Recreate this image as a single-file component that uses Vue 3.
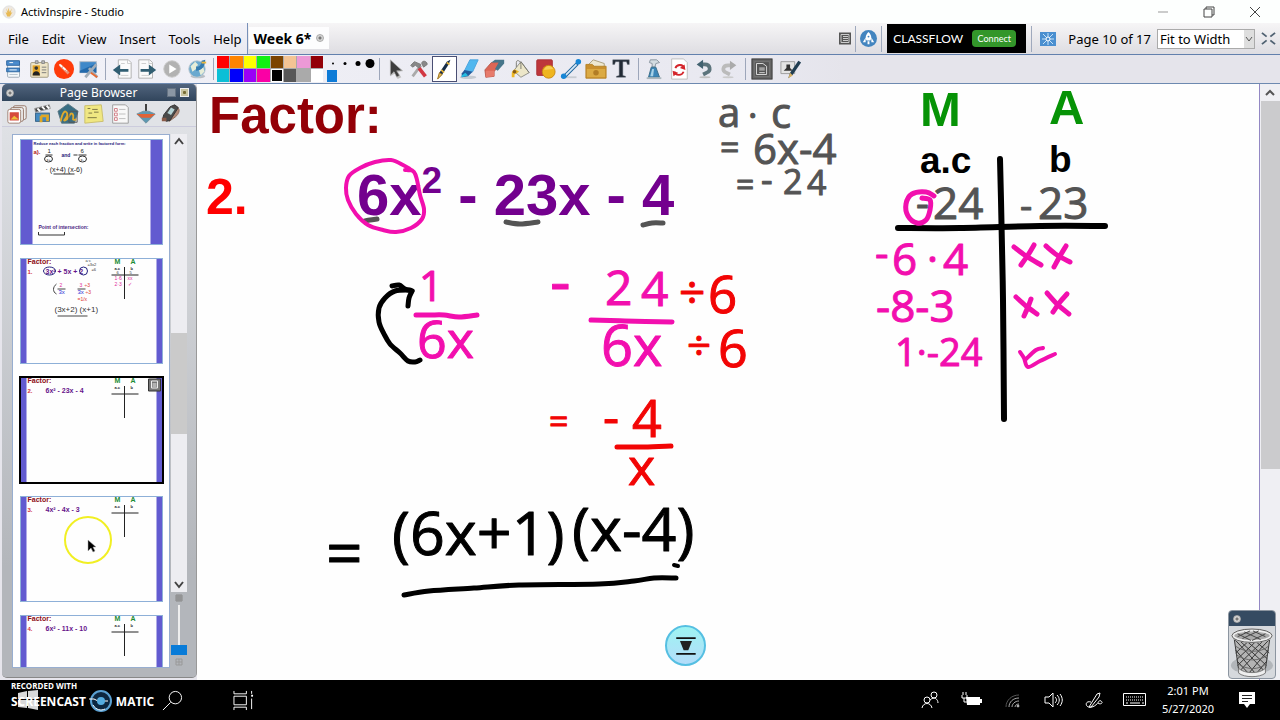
<script setup>
const menus = ['File', 'Edit', 'View', 'Insert', 'Tools', 'Help']

const icons = {
  browser: '<rect x="5" y="3" width="13" height="18" rx="1" fill="#f4f8fb" stroke="#9aa7b5"/><path d="M4 3h14v5H4zM4 11h14v4H4z" fill="#4b8ccd" stroke="#2d659f"/><path d="M7 5h4M7 13h8" stroke="#fff"/><path d="M7 18h9" stroke="#b5c1cc"/>',
  profile: '<rect x="3" y="5" width="19" height="16" rx="1" fill="#eee5c8" stroke="#9e967e"/><rect x="5" y="8" width="8" height="11" fill="#e4a526"/><circle cx="9" cy="11" r="2" fill="#333"/><path d="M5 19c0-6 8-6 8 0z" fill="#222"/><path d="M15 10h5M15 13h5M15 16h5" stroke="#777"/><path d="M8 3h3v3H8zM15 3h3v3h-3z" fill="#bbb" stroke="#888"/>',
  annotate: '<circle cx="12" cy="12" r="11" fill="#ff3b0a"/><path d="m8 8 9 9" stroke="#e99176" stroke-width="3"/><path d="m7 7 8 7" stroke="#fff" stroke-width="2" stroke-dasharray="4 1"/>',
  settings: '<rect x="2" y="4" width="18" height="12" fill="#3f88c9" stroke="#b5bdc8"/><path d="M2 14 20 6v10H2z" fill="#2269ab"/><path d="m8 21 12-14M12 11l9 10" stroke="#a2adb8" stroke-width="3"/><path d="m14 16 7 5" stroke="#e76b32" stroke-width="2"/>',
  prev: '<path d="M8 2h11l3 3v17H8z" fill="#fbfbfb" stroke="#adadad"/><path d="M18 2v4h4M11 6h4M11 19h8" stroke="#ccc" fill="none"/><path d="M19 12v3h-9v4l-8-6 8-6v5z" fill="#315e72"/>',
  next: '<path d="M3 2h12l3 3v17H3z" fill="#fbfbfb" stroke="#adadad"/><path d="M14 2v4h4M6 6h5M6 19h8" stroke="#ccc" fill="none"/><path d="M5 12v3h9v4l8-6-8-6v5z" fill="#315e72"/>',
  play: '<circle cx="12" cy="12" r="9" fill="#b2b2b2" stroke="#c8c8c8"/><path d="m9 7 8 5-8 5z" fill="#fff"/>',
  globe: '<ellipse cx="13" cy="20" rx="8" ry="2" fill="#b9bec4"/><circle cx="12" cy="12" r="9" fill="#6aa9cf" stroke="#bdc8d0"/><path d="m5 9 5-5 3 3-2 5-4 3zM14 13l5-3 1 5-4 4z" fill="#e6edd8"/><path d="M11 9c3 2 6-2 6-6l4-1c0 7-4 12-10 12z" fill="#347baf"/><path d="M17 5h5" stroke="#eab73b" stroke-width="2"/>',
  select: '<path d="m10 4 12 10-6 1 4 6-4 2-3-6-5 3z" fill="#c2c2c2"/><path d="M8 2v17l4-4 3 6 3-2-3-5h6z" fill="#3e3e3e" stroke="#bbb" stroke-width=".7"/>',
  tools: '<path d="m5 20 9-12" stroke="#aaa" stroke-width="3"/><path d="m12 11 7 9" stroke="#d23742" stroke-width="4"/><path d="m3 8 4-4 7 3-2 4-4-3-3 2zM15 6c0-4 6-3 6 1l-4 3z" fill="#888" stroke="#777"/>',
  pen: '<path d="m5 23 2-7L15 4l4-2-2 5-7 11z" fill="#162d48"/><path d="m5 23 2-7 3 2z" fill="#e6bd5d" stroke="#a77a20"/><path d="m9 13 3 3M15 5l3 2" stroke="#e3b33d" stroke-width="2"/>',
  highlighter: '<ellipse cx="11" cy="21" rx="9" ry="2" fill="#c5cbd2"/><path d="m7 14 6-12h9l-6 13z" fill="#50b7ef" stroke="#4aa2dc"/><path d="m4 17 3-4 9 2-5 5-7 1z" fill="#215b9c"/><path d="m4 19 4-3 3 3-7 2z" fill="#24bce0"/>',
  eraser: '<path d="m1 13 7-8h10l-7 10v5l-9 1z" fill="#db6656" stroke="#b9594d"/><path d="m8 5 4-3h10v4l-7 8-3-2 4-7z" fill="#46758a"/><path d="M2 14h9v6l-9 1z" fill="#e77b6c"/>',
  fill: '<path d="m5 14 8-10 9 12-9 5z" fill="#ece6c9" stroke="#8b8c86"/><path d="M8 10V5c0-4 5-2 5 2v5M13 4l9 12" fill="none" stroke="#77776e"/><path d="M3 16c2-5 4-4 8-1l-5 3v3H3z" fill="#edb725"/><circle cx="6" cy="15" r="2" fill="#845a1b"/>',
  shape: '<rect x="3" y="2" width="17" height="17" rx="1" fill="#be363b" stroke="#a83238"/><circle cx="16" cy="15" r="7" fill="#efb51e" stroke="#c78711"/><path d="M11 13c1-5 8-6 10-1" fill="#f7ce55"/>',
  connector: '<path d="M2 21h16" stroke="#c8ccd2" stroke-width="2"/><path d="m5 20 14-14" stroke="#22669c" stroke-width="4"/><path d="m6 19 12-12" stroke="#d5e8f7" stroke-width="2"/><circle cx="4" cy="20" r="3" fill="#1686d6"/><circle cx="20" cy="4" r="3" fill="#1686d6"/>',
  resources: '<path d="m3 8 6-6 12 4v6z" fill="#eee8d1" stroke="#a59a7a"/><path d="M1 7h7l2 2h13v13H1z" fill="#c98f2d" stroke="#b58226"/><path d="M2 12h20v9H2z" fill="#dbaa44"/><circle cx="12" cy="16" r="3" fill="#b27d25"/>',
  text: '<path d="M3 2h18v5h-2L18 4h-4v15l3 1v1H7v-1l3-1V4H6L5 7H3z" fill="#222a35" stroke="#6a737f" stroke-width=".5"/>',
  clear: '<path d="M8 2h7l3 3-4 1-1 4h-3V6L7 5z" fill="#d3dce1" stroke="#85929b"/><path d="m9 10-3 11h12l-4-11z" fill="#3c86b8" stroke="#356984"/><path d="m10 12-2 8h3l1-8z" fill="#a7d2e8"/><path d="M4 22h16" stroke="#abb7bd" stroke-width="2"/>',
  reset: '<path d="M4 1h13l4 4v18H4z" fill="#fff" stroke="#bbb"/><path d="M17 11c0-4-7-5-9 0m-1 4c1 4 8 5 10 0" fill="none" stroke="#d4252b" stroke-width="2"/><path d="m18 7 1 6-6-2zM6 20l-1-6 6 2z" fill="#d4252b"/>',
  undo: '<path d="M9 7h4c6 0 7 7 2 9l-4 2" fill="none" stroke="#5c747c" stroke-width="4"/><path d="M11 2v10L4 7z" fill="#426270"/><ellipse cx="13" cy="21" rx="6" ry="1" fill="#c1c1c1"/>',
  redo: '<path d="M15 8h-4c-6 0-7 6-2 8l4 2" fill="none" stroke="#bbb" stroke-width="4"/><path d="M13 3v10l7-5z" fill="#aaa"/><ellipse cx="11" cy="21" rx="6" ry="1" fill="#cbcbcb"/>',
  notes: '<rect x="1" y="1" width="22" height="22" fill="#666" stroke="#333"/><rect x="4" y="4" width="16" height="16" fill="#555" stroke="#777"/><path d="M6 6h7l4 3v9H6z" fill="none" stroke="#e1e1e1"/><path d="M9 11h6M9 13h6M9 16h6" stroke="#e1e1e1"/>',
  desktop: '<path d="M1 4h15v13H1z" fill="#e4e4e4" stroke="#999"/><path d="M7 7h4v4l3 3H4l3-3z" fill="#333"/><path d="m9 22 2-6L20 3l3 2-9 13z" fill="#203d51"/><path d="m9 22 2-6 3 3z" fill="#d7b164"/>',
  pages: '<rect x="8" y="3" width="14" height="15" rx="2" fill="#eee" stroke="#917060"/><rect x="5" y="5" width="14" height="15" rx="2" fill="#eee" stroke="#917060"/><rect x="2" y="7" width="14" height="15" rx="2" fill="#fff" stroke="#9d7c6e"/><path d="M4 10h10v9H4z" fill="#d64b3c"/><path d="m5 18 4-4 5 4z" fill="#efbf38"/>',
  media: '<rect x="5" y="11" width="15" height="9" fill="#458bc2" stroke="#315e82"/><path d="m4 6 16-4 1 4L5 10z" fill="#444" stroke="#999"/><path d="m7 6 3 3m2-5 3 3m2-4 3 3" stroke="#fff" stroke-width="2"/><path d="M11 14v7m0-7h7v6" fill="none" stroke="#e1a722" stroke-width="3"/>',
  objects: '<path d="m12 1 11 8-4 13H5L1 9z" fill="#386e84" stroke="#5a7682"/><path d="M4 20c2-10 5-13 7-9s-6 9-2 8 5-10 8-7-3 8 4 6" fill="none" stroke="#dfa92d" stroke-width="2"/><path d="M13 9h9v12h-9z" fill="none" stroke="#555"/>',
  note: '<path d="m2 3 18-1 2 18-20 2z" fill="#f0e782" stroke="#c9bd6a"/><path d="M5 6h3m2 1h6M6 11h4m2-1h5M5 16h10" stroke="#777040"/>',
  props: '<path d="M4 2h14l3 3v17H4z" fill="#f8f8f8" stroke="#999"/><path d="M11 7h7M11 12h7M11 17h7" stroke="#bbb"/><path d="M6 6h3v3H6zM6 11h3v3H6zM6 16h3v3H6z" fill="#fff" stroke="#cf7881"/>',
  action: '<path d="M11 1h2v8h-2z" fill="#333"/><path d="m2 12 7-3h6l7 3-10 10z" fill="#5c98b1" stroke="#7393a2"/><path d="M2 12h20l-5 4H7z" fill="#de6337"/>',
  voting: '<path d="M14 6c8-4 9 4 3 9l-7 5c-4-7 3-9 4-14z" fill="#b08a78" stroke="#8d6959"/><path d="m4 13 7-9 5-2 4 3-9 14-4 1-4-3z" fill="#4a4a4a" stroke="#333"/><path d="m12 5 4 2-4 6-4-2z" fill="#b4d2d4"/><path d="M2 16h5v4H2z" fill="#8a5b49"/>'
}

const toolGroups = [
  ['browser', 'profile', 'annotate', 'settings'],
  ['prev', 'next', 'play', 'globe']
]
const drawTools = ['select', 'tools', 'pen', 'highlighter', 'eraser', 'fill', 'shape', 'connector', 'resources', 'text']
const editTools = ['clear', 'reset', 'undo', 'redo']
const panelTools = ['pages', 'media', 'objects', 'note', 'props', 'action', 'voting']
const palette = ['#ff0000', '#ff8400', '#ffff00', '#12f012', '#7c4300', '#f4c494', '#ec99d6', '#930007', '#0bbfd6', '#0000fa', '#9a00f6', '#fa00a5', '#000000', '#575757', '#aaaaaa', '#ffffff']

const pages = [
  { n: '1.', expr: '3x² + 5x + 2', worked: true },
  { n: '2.', expr: '6x² - 23x - 4', current: true },
  { n: '3.', expr: '4x² - 4x - 3' },
  { n: '4.', expr: '6x² - 11x - 10' }
]

const GREY = '#545454', PINK = '#f20fae', RED = '#f20505', BLACK = '#000000'

/* Handwritten notes: text, x, baseline, size, pen colour */
const hand = [
  ['a', 718, 127, 40, GREY], ['·', 748, 128, 36, GREY], ['c', 771, 128, 42, GREY],
  ['=', 720, 160, 34, GREY], ['6x-4', 753, 164, 42, GREY],
  ['=', 736, 196, 32, GREY], ['-', 761, 193, 36, GREY], ['2', 783, 194, 34, GREY], ['4', 807, 195, 34, GREY],
  ['-', 916, 217, 40, GREY], ['24', 933, 219, 44, GREY],
  ['-', 1020, 219, 38, GREY], ['23', 1038, 219, 44, GREY],
  ['-', 875, 268, 42, PINK], ['6', 892, 275, 44, PINK], ['·', 927, 274, 42, PINK], ['4', 943, 275, 44, PINK],
  ['-8-3', 876, 322, 44, PINK],
  ['1·-24', 895, 366, 38, PINK],
  ['1', 419, 301, 42, PINK], ['6x', 417, 358, 52, PINK],
  ['-', 550, 304, 64, PINK], ['2', 605, 305, 48, PINK], ['4', 641, 306, 48, PINK], ['6x', 601, 366, 56, PINK],
  ['÷', 679, 309, 46, RED], ['6', 708, 313, 51, RED], ['÷', 687, 360, 42, RED], ['6', 718, 367, 52, RED],
  ['=', 549, 434, 34, RED], ['-', 603, 435, 50, RED], ['4', 632, 437, 52, RED], ['x', 628, 485, 52, RED],
  ['=', 326, 576, 64, BLACK], ['(6x+1)', 392, 555, 61, BLACK], ['(x-4)', 572, 551, 61, BLACK]
]

/* Catmull-Rom curve through a flat list of coordinates */
function curve(list) {
  const p = []
  for (let i = 0; i < list.length; i += 2) p.push([list[i], list[i + 1]])
  let d = `M${p[0]}`
  for (let i = 0; i < p.length - 1; i++) {
    const a = p[i - 1] || p[i], b = p[i], c = p[i + 1], e = p[i + 2] || c
    d += `C${b[0] + (c[0] - a[0]) / 6} ${b[1] + (c[1] - a[1]) / 6} ${c[0] - (e[0] - b[0]) / 6} ${c[1] - (e[1] - b[1]) / 6} ${c[0]} ${c[1]}`
  }
  return d
}

const strokes = [
  [BLACK, 6, [1000, 159, 1001, 200, 1003, 300, 1004, 419]],
  [BLACK, 6, [898, 228, 960, 228, 1040, 226, 1105, 226]],
  [GREY, 5, [365, 221, 370, 220, 377, 219]],
  [GREY, 5, [506, 222, 520, 224, 538, 222]],
  [GREY, 5, [643, 225, 652, 223, 663, 223]],
  [PINK, 4, [405, 170, 411, 170, 403, 165, 391, 160, 375, 162, 360, 168, 349, 176, 346, 188, 348, 200, 356, 214, 368, 225, 383, 230, 396, 232, 411, 228, 422, 219, 424, 209, 420, 195, 417, 180, 414, 172, 407, 168]],
  [PINK, 5, [934, 196, 926, 192, 912, 194, 906, 204, 908, 216, 917, 223, 926, 220, 930, 210, 930, 200, 922, 198]],
  [PINK, 5, [1014, 247, 1026, 256, 1041, 265]], [PINK, 5, [1034, 245, 1028, 255, 1021, 265]],
  [PINK, 5, [1046, 246, 1057, 255, 1070, 262]], [PINK, 5, [1066, 246, 1060, 256, 1054, 267]],
  [PINK, 5, [1016, 297, 1026, 306, 1037, 314]], [PINK, 5, [1031, 299, 1028, 307, 1024, 316]],
  [PINK, 5, [1047, 293, 1057, 304, 1069, 314]], [PINK, 5, [1067, 294, 1060, 302, 1053, 312]],
  [PINK, 4, [1020, 352, 1024, 358, 1028, 367, 1040, 361, 1055, 354]],
  [PINK, 4, [1043, 348, 1036, 350, 1025, 360]],
  [PINK, 5, [416, 315, 430, 315, 444, 315, 459, 317, 477, 315]],
  [PINK, 5, [591, 320, 625, 321, 672, 322]],
  [RED, 5, [617, 447, 644, 447, 671, 446]],
  [BLACK, 5, [420, 360, 415, 362, 408, 361, 400, 353, 390, 344, 384, 334, 379, 322, 379, 308, 385, 298, 395, 291, 410, 290]],
  [BLACK, 5, [392, 286, 399, 285, 405, 289, 412, 291]], [BLACK, 5, [412, 291, 409, 298, 408, 306]],
  [BLACK, 5, [404, 595, 429, 591, 474, 588, 519, 585, 599, 584, 634, 581, 654, 578, 676, 578]],
  [BLACK, 4, [674, 565, 678, 566]]
].map(([color, width, pts]) => ({ color, width, d: curve(pts) }))
</script>

<template>
  <div class="app">
    <header class="titlebar">
      <svg class="logo" viewBox="0 0 16 16"><circle cx="8" cy="8" r="7" fill="#eee9df" stroke="#ddd" /><path d="M6 13 4 8l2 1-1-5 2 4V3l2 5 2-4-1 5 2-1-3 5z" fill="#e8ba54" /></svg>
      <h1>ActivInspire - Studio</h1>
      <button aria-label="Minimise"><svg viewBox="0 0 12 12"><path d="M1 6h10" stroke="#999" /></svg></button>
      <button aria-label="Restore"><svg viewBox="0 0 12 12" fill="none" stroke="#444"><path d="M1 3h8v8H1zM3 3V1h8v8H9" /></svg></button>
      <button aria-label="Close"><svg viewBox="0 0 12 12" stroke="#444"><path d="m1 1 10 10M11 1 1 11" /></svg></button>
    </header>

    <div class="menubar">
      <nav class="menus"><button v-for="m in menus" :key="m">{{ m }}</button></nav>
      <div class="tab"><b>Week 6*</b><button class="dot-close" aria-label="Close tab"></button></div>
      <div class="menu-right">
        <button class="mini" aria-label="Page notes"><svg viewBox="0 0 12 12"><path d="M0 0h12v12H0z" fill="#555" /><path d="M2 2h8v8H2zM4 4h5M4 6h5M4 8h5" fill="none" stroke="#ccc" /></svg></button>
        <i class="vline"></i>
        <button class="rocket" aria-label="Launch"><svg viewBox="0 0 18 18"><circle cx="9" cy="9" r="9" fill="#4385bf" /><path d="M9 2c4 4 3 7 2 9H7C6 9 5 6 9 2zM6 8l-3 5h3zm6 0 3 5h-3zM8 12h2v3H8z" fill="#fff" /><circle cx="9" cy="7" r="1" fill="#4385bf" /></svg></button>
        <i class="vline"></i>
        <div class="classflow"><span>CLASSFLOW</span><button>Connect</button></div>
        <i class="vline"></i>
        <button class="snow" aria-label="Freeze"><svg viewBox="0 0 16 14"><path d="M0 0h16v14H0z" fill="#4a8fd0" /><path d="M8 1v12M2 7h12M3 2l10 10M13 2 3 12" stroke="#c6e2f7" /><circle cx="8" cy="7" r="2" fill="#4a8fd0" stroke="#fff" /></svg></button>
        <span class="pageno">Page 10 of 17</span>
        <div class="zoom">
          <select aria-label="Zoom"><option>Fit to Width</option></select>
          <svg viewBox="0 0 10 18"><path d="m2 7 3 4 3-4" fill="none" stroke="#555" /></svg>
        </div>
        <button class="expand" aria-label="Full screen"><svg viewBox="0 0 16 16" stroke="#506272" stroke-width="2"><path d="m1 2 5 4M15 2l-5 4M1 14l5-4M15 14l-5-4" /></svg></button>
      </div>
    </div>

    <div class="toolbar">
      <template v-for="(g, i) in toolGroups" :key="i">
        <div class="group"><button v-for="t in g" :key="t" class="tool" :aria-label="t"><svg viewBox="0 0 24 24" v-html="icons[t]"></svg></button></div>
        <i class="sep"></i>
      </template>
      <div class="palette"><button v-for="(c, i) in palette" :key="c" :class="{ picked: i === 12 }" :style="{ background: c }" :aria-label="'Colour ' + c"></button></div>
      <div class="sizes">
        <svg viewBox="0 0 48 12"><circle cx="6" cy="6" r="1" /><circle cx="18" cy="6" r="1.500" /><circle cx="31" cy="6" r="2.500" /><circle cx="43" cy="6" r="4.500" /></svg>
        <button class="size-pick" aria-label="Pen width"></button>
      </div>
      <i class="sep narrow"></i>
      <div class="group draw"><button v-for="t in drawTools" :key="t" class="tool" :class="{ active: t === 'pen' }" :aria-label="t"><svg viewBox="0 0 24 24" v-html="icons[t]"></svg></button></div>
      <i class="sep"></i>
      <div class="group edit"><button v-for="t in editTools" :key="t" class="tool" :aria-label="t"><svg viewBox="0 0 24 24" v-html="icons[t]"></svg></button></div>
      <i class="sep"></i>
      <div class="group ends"><button class="tool" aria-label="Notes"><svg viewBox="0 0 24 24" v-html="icons.notes"></svg></button><button class="tool" aria-label="Annotate desktop"><svg viewBox="0 0 24 24" v-html="icons.desktop"></svg></button></div>
    </div>

    <main class="work">
      <aside class="panel">
        <header class="panel-head">
          <button class="dot-close" aria-label="Close panel"></button>
          <h2>Page Browser</h2>
          <button class="pin dim" aria-label="Dock"></button><button class="pin" aria-label="Pin"></button>
        </header>
        <div class="panel-tools"><button v-for="t in panelTools" :key="t" class="tool" :aria-label="t"><svg viewBox="0 0 24 24" v-html="icons[t]"></svg></button></div>
        <div class="panel-body">
          <div class="thumbs">
            <svg class="thumb" viewBox="0 0 142 106">
              <path d="M0 0h12v106H0zM130 0h12v106h-12z" fill="#625bd0" />
              <g font-weight="700"><text x="13" y="6" font-size="4" fill="#25207a">Reduce each fraction and write in factored form:</text>
              <text x="13" y="15" font-size="6" fill="#b02020">a).</text><text x="41" y="18" font-size="5" fill="#25207a">and</text>
              <text x="18" y="90" font-size="5" fill="#4b1f83">Point of intersection:</text></g>
              <g fill="none" stroke="#333"><ellipse cx="28" cy="20" rx="4" ry="3" /><ellipse cx="62" cy="20" rx="4" ry="3" /><path d="M25 16h7M53 16h4M58 16h8M33 35h21M18 93v3h26v-3" /></g>
              <g fill="#222" font-size="6"><text x="27" y="14">1</text><text x="60" y="14">6</text><text x="26" y="22" font-size="4">x+</text><text x="60" y="22" font-size="4">x-</text><text x="25" y="33" font-size="7">· (x+4) (x-6)</text></g>
            </svg>
            <svg v-for="p in pages" :key="p.n" class="thumb" :class="{ current: p.current }" viewBox="0 0 142 106">
              <path d="M0 0h6v106H0zM136 0h6v106h-6z" fill="#625bd0" />
              <g font-weight="700">
                <text x="7" y="6" font-size="7" fill="#8e0d14">Factor:</text>
                <text x="7" y="16" font-size="6" fill="#d22f3a">{{ p.n }}</text>
                <text x="25" y="16" font-size="7" fill="#67158b">{{ p.expr }}</text>
                <text x="94" y="6" font-size="7" fill="#1b8c33">M</text><text x="110" y="6" font-size="7" fill="#1b8c33">A</text>
                <text x="94" y="12" font-size="4" fill="#222">a.c</text><text x="110" y="12" font-size="4" fill="#222">b</text>
              </g>
              <path d="M91 17h27M104 9v32" stroke="#222" />
              <g v-if="p.worked">
                <g fill="none" stroke="#24217e"><ellipse cx="29" cy="13" rx="6" ry="4" /><ellipse cx="63" cy="13" rx="4" ry="4" /></g>
                <g font-size="4" fill="#333"><text x="65" y="4">a·c</text><text x="67" y="8">=3x2</text><text x="71" y="13">=6</text><text x="96" y="16">6</text><text x="109" y="16">5</text><text x="34" y="54" font-size="8">(3x+2) (x+1)</text></g>
                <g font-size="5" fill="#e02a9b"><text x="39" y="29">2</text><text x="59" y="29">3</text><text x="94" y="22">1·6</text><text x="94" y="28">2·3</text><text x="107" y="22">xx</text><text x="107" y="28">✓</text></g>
                <g font-size="6" fill="#292bd3"><text x="38" y="36">3x</text><text x="57" y="36">3x</text></g>
                <g font-size="5" fill="#dc3333"><text x="64" y="29">÷3</text><text x="65" y="36">÷3</text><text x="57" y="43">=1/x</text></g>
                <path d="M37 31h8M57 31h8M37 58h30M36 26c-4 3-4 8 0 10" fill="none" stroke="#444" />
              </g>
              <g v-if="p.current"><path d="M128 2h12v12h-12z" fill="#777" stroke="#333" /><path d="M131 4h6v7h-6zM132 7h4M132 9h4" fill="none" stroke="#eee" /></g>
            </svg>
            <svg class="pointer" viewBox="0 0 50 50"><circle cx="24" cy="24" r="23" fill="none" stroke="#f1ef23" stroke-width="2" /><path d="M24 24v11l3-3 2 4 2-1-2-4h3z" fill="#000" stroke="#aaa" stroke-width=".5" /></svg>
          </div>
          <div class="rail">
            <div class="scroll">
              <svg viewBox="0 0 16 16"><path d="m4 10 4-5 4 5" fill="none" stroke="#444" stroke-width="2" /></svg>
              <div class="scroll-thumb"></div>
              <svg viewBox="0 0 16 16"><path d="m4 6 4 5 4-5" fill="none" stroke="#444" stroke-width="2" /></svg>
            </div>
            <div class="thumb-size">
              <svg viewBox="0 0 8 8"><path d="M1 1h6v6H1zM3 1v6M5 1v6M1 3h6M1 5h6" fill="none" stroke="#888" /></svg>
              <div class="track"><span></span></div>
              <svg viewBox="0 0 8 8"><path d="M1 1h6v6H1zM4 1v6M1 4h6" fill="none" stroke="#999" /></svg>
            </div>
          </div>
        </div>
      </aside>

      <section class="stage">
        <svg class="slide" viewBox="197 84 1062 596" preserveAspectRatio="xMinYMin meet">
          <g class="print">
            <text x="209" y="133" font-size="51" fill="#930007">Factor:</text>
            <text x="206" y="214" font-size="50" fill="#ff0000">2.</text>
            <text x="357" y="215" font-size="58" fill="#73008e">6x<tspan font-size="37" dy="-22">2</tspan><tspan dy="22"> - 23x - 4</tspan></text>
            <text x="920" y="126" font-size="49" fill="#069306">M</text>
            <text x="1049" y="124" font-size="49" fill="#069306">A</text>
            <text x="920" y="173" font-size="37" fill="#000">a.c</text>
            <text x="1049" y="172" font-size="37" fill="#000">b</text>
          </g>
          <g class="ink"><path v-for="(s, i) in strokes" :key="i" :d="s.d" :stroke="s.color" :stroke-width="s.width" /></g>
          <g class="hand"><text v-for="([t, x, y, s, c], i) in hand" :key="i" :x="x" :y="y" :font-size="s" :fill="c" :stroke="c">{{ t }}</text></g>
        </svg>
        <button class="extend" aria-label="Extend page"><svg viewBox="0 0 40 40"><path d="M10 12h21M10 29h21" stroke="#111" stroke-width="2" /><path d="M14 15h13l-4 10h-5z" fill="#222" /></svg></button>
      </section>

      <div class="vscroll">
        <svg viewBox="0 0 20 16"><path d="m6 11 4-4 4 4" fill="none" stroke="#555" stroke-width="2" /></svg>
        <div class="vthumb"></div>
      </div>

      <div class="bin">
        <header><button class="dot-close" aria-label="Close bin"></button></header>
        <svg viewBox="0 0 48 52">
          <ellipse cx="24" cy="40" rx="22" ry="9" fill="#b2b6ba" />
          <path d="M5 9 10 44c4 7 24 7 28 0l5-35z" fill="#b4b4b4" stroke="#333" />
          <path d="m6 13 30 32M12 15l27 25M20 16l20 17M29 16l13 11M7 24l21 25M9 36l11 12M42 13 12 45M35 15 9 40M27 16 8 34M19 16 7 27M41 24 20 49M39 36 29 48" stroke="#333" stroke-width="1" />
          <path d="M7 20c9 7 27 7 34 0M8 29c9 7 25 7 32 0M9 38c9 7 23 7 30 0" fill="none" stroke="#666" />
          <ellipse cx="24" cy="9" rx="20" ry="6" fill="#aaa" stroke="#eee" stroke-width="3" /><path d="m9 7 14 7M16 5l17 8M25 4l13 6M38 7 24 14M31 4l-17 8M22 4 9 10" stroke="#444" /><ellipse cx="24" cy="9" rx="21" ry="7" fill="none" stroke="#555" />
          <path d="M10 43c6 6 22 6 28 0v5c-6 5-22 5-28 0z" fill="#eee" stroke="#777" />
        </svg>
      </div>
    </main>

    <footer class="taskbar">
      <div class="recorder">
        <svg class="win" viewBox="0 0 20 20"><path d="m0 3 9-2v8H0zM10 1l10-1v9H10zM0 10h9v8l-9-1zM10 10h10v10l-10-2z" fill="#fff" /></svg>
        <small>RECORDED WITH</small>
        <div class="brand"><b>SCREENCAST</b><svg viewBox="0 0 26 26"><circle cx="13" cy="13" r="10" fill="#0d2740" stroke="#5aa0d2" stroke-width="2" /><path d="M1 11h5l4 2M16 13h4M5 17c3 5 8 6 12 4" fill="none" stroke="#fff" /><circle cx="13" cy="13" r="4" fill="#55acdf" /></svg><b>MATIC</b></div>
      </div>
      <button class="search" aria-label="Search"><svg viewBox="0 0 22 22" fill="none" stroke="#fff"><circle cx="14" cy="8" r="6.500" /><path d="m9 13-8 8" /></svg></button>
      <button class="taskview" aria-label="Task view"><svg viewBox="0 0 22 22" fill="none" stroke="#fff"><path d="M1 1v3h13V1M1 6.500h13v9H1zM1 21v-3h13v3M19.500 1v3M19.500 9v11" /><path d="M19 6h2" stroke-width="2" /></svg></button>
      <div class="tray">
        <button aria-label="People"><svg viewBox="0 0 24 24" fill="none" stroke="#fff"><circle cx="9" cy="12" r="3" /><circle cx="16" cy="7" r="3" /><path d="M4 20c1-6 9-6 10 0M12 12c4-4 8-1 8 3" /></svg></button>
        <button aria-label="Battery"><svg viewBox="0 0 24 24"><path d="M7 9h14v8H8zM21 11h2v4h-2z" fill="#fff" /><path d="M3 7v3h5V7M4 4v3M7 4v3M5 10v4h4" fill="none" stroke="#fff" /></svg></button>
        <button aria-label="Wi-Fi"><svg viewBox="0 0 24 24" fill="none" stroke="#aaa"><path d="M6 19C6 12 12 7 19 7" stroke="#555" /><path d="M9 19c0-5 4-9 10-9M12 19c0-3 3-6 7-6M15 19c0-2 2-3 4-3" /><circle cx="18" cy="18" r="1" fill="#fff" /></svg></button>
        <button aria-label="Volume"><svg viewBox="0 0 24 24" fill="none" stroke="#fff"><path d="M4 9h4l4-4v14l-4-4H4zM14 9c2 2 2 4 0 6M16 7c3 3 3 7 0 10M19 6c3 4 3 8 0 12" /></svg></button>
        <button aria-label="Pen workspace"><svg viewBox="0 0 24 24" fill="none" stroke="#fff"><path d="M7 19 15 6l3-1-1 4-8 10zM9 14c-7-2-6 7 1 5s6-8 9-6-1 4-3 2" /></svg></button>
        <button class="kbd" aria-label="Keyboard"><svg viewBox="0 0 24 14" fill="none" stroke="#fff"><path d="M.500.500h22v12H.500z" /><path d="M3 4h18M3 7h18" stroke-dasharray="1 1" /><path d="M3 10h2M7 10h10M19 10h2" /></svg></button>
        <div class="clock"><span>2:01 PM</span><span>5/27/2020</span></div>
        <button class="notif" aria-label="Notifications"><svg viewBox="0 0 18 18"><path d="M1 1h16v12h-5l-3 4-3-4H1z" fill="#fff" /><path d="M4 4.500h10M4 7.500h10M4 10.500h6" stroke="#222" /></svg></button>
      </div>
    </footer>
  </div>
</template>

<style>
body { margin: 0; overflow: hidden; }
</style>

<style scoped>
* { box-sizing: border-box; }
.app { height: 100vh; display: flex; flex-direction: column; font-family: "Noto Sans", "Open Sans", sans-serif; font-size: 13px; color: #000; background: #fff; }
button { border: 0; padding: 0; margin: 0; background: none; font: inherit; color: inherit; }
svg { display: block; }
h1, h2 { margin: 0; font-weight: 400; }

.titlebar { height: 23px; flex: none; display: flex; align-items: center; gap: 34px; padding: 0 19px 0 2px; background: #fdfffe; }
.titlebar .logo { width: 14px; height: 14px; margin-right: -29px; }
.titlebar h1 { flex: 1; font-size: 11px; }
.titlebar button svg { width: 12px; height: 12px; }

.menubar { height: 32px; flex: none; display: flex; background: linear-gradient(#f6f5f6, #dedde2); border-bottom: 1px solid #6280ad; }
.menus { display: flex; gap: 13px; padding: 0 5px 0 8px; border-right: 1px solid #7790b8; background: linear-gradient(#f3f3f9, #e8e8f0); }
.tab { display: flex; align-items: center; gap: 5px; height: 22px; margin: 4px 0 0 1px; padding: 0 5px; background: #fdfdfe; }
.tab b { font-size: 14px; }
.dot-close { width: 8px; height: 8px; border-radius: 50%; background: radial-gradient(#777 20%, #d6d6d6 50%); border: 1px solid #aaa; flex: none; }
.menu-right { margin-left: auto; display: flex; align-items: center; gap: 4px; padding-right: 4px; }
.vline { width: 1px; height: 26px; background: #9fa9bd; }
.mini svg { width: 12px; height: 13px; }
.rocket svg { width: 17px; height: 17px; }
.classflow { height: 29px; width: 139px; background: #000; color: #fff; display: flex; align-items: center; justify-content: space-between; margin: 0 1px; padding: 0 10px 0 6px; font-family: Lato, sans-serif; font-size: 12px; }
.classflow button { background: #33962a; border-radius: 4px; height: 17px; width: 44px; font-size: 9px; }
.snow { margin-left: 4px; }
.snow svg { width: 16px; height: 14px; }
.pageno { margin: 0 2px 0 8px; white-space: nowrap; }
.zoom { position: relative; width: 98px; height: 20px; }
.zoom select { appearance: none; width: 100%; height: 100%; border: 1px solid #aaa; border-radius: 0; background: #fff; padding: 0 2px; font: inherit; color: #000; }
.zoom svg { position: absolute; right: 1px; top: 1px; width: 10px; height: 18px; background: #dedede; pointer-events: none; }
.expand { margin-left: 2px; }
.expand svg { width: 15px; height: 15px; }

.toolbar { height: 29px; flex: none; display: flex; align-items: center; padding-left: 1px; background: linear-gradient(90deg, #f2f2f8, #e8e8f0 60%, #e5e4eb 66%); border-bottom: 1px solid #6d89b0; }
.group { display: flex; flex: none; }
.tool { width: 25px; height: 26px; display: grid; place-items: center; }
.tool svg { width: 22px; height: 22px; }
.tool.active { background: #fff; border: 1px solid #4a4f73; }
.draw { width: 253px; justify-content: space-between; }
.edit { width: 99px; justify-content: space-between; }
.ends { width: 54px; justify-content: space-between; }
.sep { width: 1px; height: 22px; margin: 0 3px 0 4px; background: #9da6ba; flex: none; }
.sep.narrow { margin: 0 1px; }
.palette { width: 106px; height: 26px; display: grid; grid-template-columns: repeat(8, 1fr); gap: 1px; background: #aaa; flex: none; }
.palette .picked { border: 1px solid #fff; outline: 1px solid #000; outline-offset: -2px; }
.sizes { width: 55px; padding: 0 3px 0 4px; flex: none; }
.sizes svg { width: 48px; height: 13px; }
.size-pick { display: block; width: 10px; height: 12px; background: #0d7bd7; }

.work { flex: 1; min-height: 0; display: flex; position: relative; background: #e6e5ec; }
.panel { width: 195px; margin: 0 0 2px 2px; flex: none; display: flex; flex-direction: column; border-radius: 5px; overflow: hidden; background: #b8bbc0; border-right: 1px solid #999; border-bottom: 1px solid #888; }
.panel-head { height: 17px; flex: none; display: flex; align-items: center; gap: 4px; padding: 0 7px 0 4px; background: linear-gradient(#51647d, #31455c); color: #fff; }
.panel-head h2 { flex: 1; text-align: center; font-size: 12px; line-height: 16px; padding-left: 16px; }
.pin { width: 9px; height: 9px; background: radial-gradient(#776c35 25%, #c9c5a0 40%); border: 1px solid #eee; }
.pin.dim { background: #8a96a4; border-color: #657383; }
.panel-tools { height: 26px; flex: none; display: flex; justify-content: space-between; padding: 0 12px 0 2px; background: #e1e3e7; border-bottom: 1px solid #ccd; }
.panel-body { flex: 1; min-height: 0; display: flex; gap: 1px; padding: 7px 9px 9px 10px; background: linear-gradient(#dfe1e5, #b3b6bb 80%); }
.thumbs { width: 159px; position: relative; overflow: hidden; display: flex; flex-direction: column; gap: 13px; padding: 4px 7px; background: #fff; border: 1px solid #98aed0; }
.thumb { width: 143px; height: 106px; flex: none; background: #fefefe; outline: 1px solid #8eb0d8; outline-offset: -1px; font-family: "Liberation Sans", Arial, sans-serif; }
.thumb.current { outline: 2px solid #000; }
.pointer { position: absolute; left: 51px; top: 381px; width: 50px; height: 50px; }
.rail { flex: 1; display: flex; flex-direction: column; }
.scroll { flex: 1; display: flex; flex-direction: column; background: #ededf1; }
.scroll svg { width: 16px; height: 16px; }
.scroll-thumb { margin: 183px 0 auto; height: 101px; background: #cacaca; }
.thumb-size { height: 76px; display: flex; flex-direction: column; align-items: center; gap: 3px; padding: 2px 0; }
.thumb-size svg { width: 8px; height: 8px; }
.track { flex: 1; width: 100%; display: flex; align-items: flex-end; background: linear-gradient(#eee, #eee) center / 2px 100% no-repeat; }
.track span { width: 100%; height: 10px; background: #087bd8; }

.stage { flex: 1; min-width: 0; position: relative; background: #fefefe; }
.slide { width: 100%; height: 100%; overflow: visible; }
.print { font-family: "Liberation Sans", Arial, sans-serif; font-weight: 700; }
.print text { white-space: pre; }
.ink { fill: none; stroke-linecap: round; stroke-linejoin: round; }
.hand { font-family: "Open Sans", sans-serif; font-weight: 400; stroke-width: 1px; stroke-linejoin: round; }
.extend { position: absolute; left: 468px; bottom: 14px; width: 41px; height: 41px; border-radius: 50%; border: 2px solid #55bfe2; background: linear-gradient(#9df4f2, #b4dcfa); }
.extend svg { width: 37px; height: 37px; }
.vscroll { width: 21px; flex: none; background: #efeff3; border-left: 1px solid #9388c4; }
.vscroll svg { width: 20px; height: 16px; }
.vthumb { height: 368px; margin: 1px 0 0 1px; background: #cbcbcd; }
.bin { position: absolute; right: 4px; bottom: 1px; width: 48px; border-radius: 4px; overflow: hidden; background: #d6d9dd; border: 1px solid #8c95a0; }
.bin header { height: 15px; display: flex; align-items: center; padding-left: 4px; background: #354b62; }
.bin svg { width: 46px; height: 52px; }

.taskbar { height: 40px; flex: none; display: flex; align-items: center; background: #000; color: #fff; padding: 0 24px 0 11px; }
.recorder { position: relative; width: 145px; height: 40px; }
.recorder small { display: block; position: relative; font: 700 8px/10px "Open Sans", sans-serif; padding-top: 1px; }
.win { position: absolute; left: 7px; top: 10px; width: 20px; height: 20px; opacity: .85; }
.brand { position: relative; display: flex; align-items: center; gap: 2px; height: 20px; font-family: "Open Sans", sans-serif; font-size: 12px; }
.brand svg { width: 26px; height: 26px; }
.search { margin-left: 6px; }
.search svg, .taskview svg { width: 21px; height: 21px; }
.taskview { margin-left: 50px; }
.tray { margin-left: auto; display: flex; align-items: center; gap: 17px; }
.tray svg { width: 24px; height: 24px; }
.tray .kbd svg { height: 14px; }
.clock { width: 62px; margin: 0 2px 0 -7px; display: flex; flex-direction: column; align-items: center; font-size: 11px; line-height: 18px; }
.tray .notif svg { width: 18px; height: 18px; }
</style>
